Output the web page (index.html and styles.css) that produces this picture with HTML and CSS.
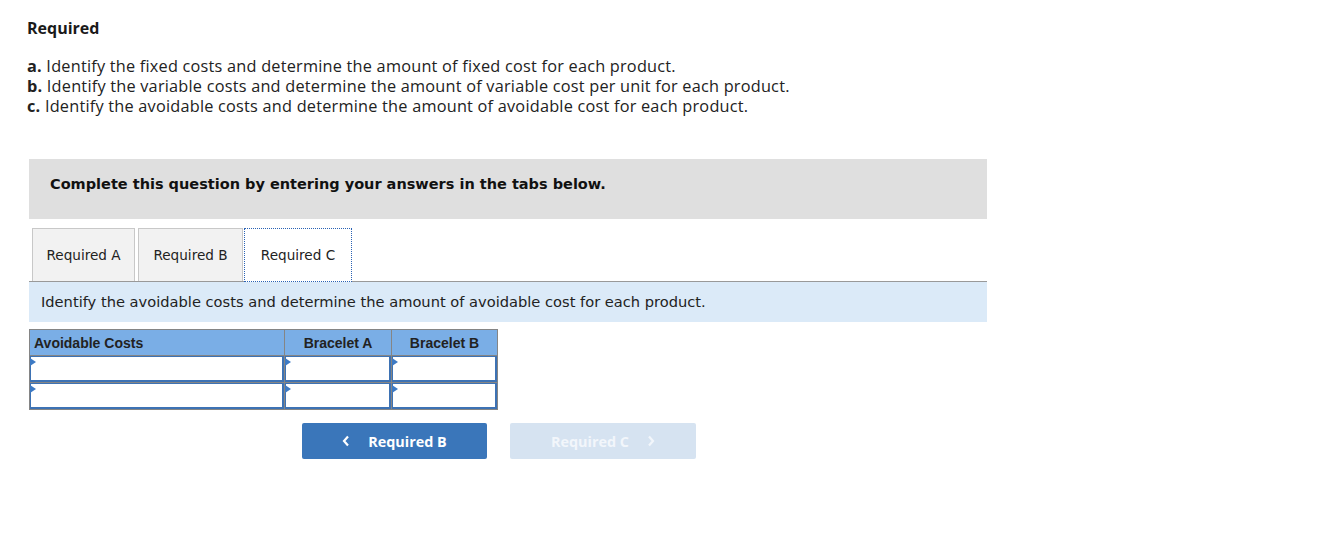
FILE: index.html
```html
<!DOCTYPE html>
<html>
<head>
<meta charset="utf-8">
<link rel="stylesheet" href="styles.css">
</head>
<body>
<div class="page">
  <h2 class="req-title">Required</h2>
  <div class="req-list">
    <p><b>a.</b> Identify the fixed costs and determine the amount of fixed cost for each product.</p>
    <p><b>b.</b> Identify the variable costs and determine the amount of variable cost per unit for each product.</p>
    <p><b>c.</b> Identify the avoidable costs and determine the amount of avoidable cost for each product.</p>
  </div>

  <div class="panel">
    <div class="banner">Complete this question by entering your answers in the tabs below.</div>
    <div class="tabs">
      <div class="tab">Required A</div>
      <div class="tab">Required B</div>
      <div class="tab active">Required C</div>
    </div>
    <div class="instr">Identify the avoidable costs and determine the amount of avoidable cost for each product.</div>

    <div class="grid">
      <div class="hd left">Avoidable Costs</div>
      <div class="hd">Bracelet A</div>
      <div class="hd">Bracelet B</div>
      <div class="inp"></div>
      <div class="inp"></div>
      <div class="inp"></div>
      <div class="inp"></div>
      <div class="inp"></div>
      <div class="inp"></div>
    </div>

    <div class="nav">
      <button class="btn prev"><svg class="chev" width="8" height="12" viewBox="0 0 8 12"><polyline points="6,1.5 2,6 6,10.5" fill="none" stroke="currentColor" stroke-width="2.2"/></svg>Required B</button>
      <button class="btn next">Required C<svg class="chev" width="8" height="12" viewBox="0 0 8 12"><polyline points="2,1.5 6,6 2,10.5" fill="none" stroke="currentColor" stroke-width="2.2"/></svg></button>
    </div>
  </div>
</div>
</body>
</html>
```

FILE: styles.css
```css
html, body {
  margin: 0;
  padding: 0;
  background: #fff;
}
.page {
  padding: 18px 0 0 27px;
  font-family: "Open Sans", Lato, sans-serif;
  color: #222;
  font-variant-ligatures: none;
}
.req-title {
  margin: 0;
  font-size: 16px;
  font-weight: 700;
  line-height: 20px;
  color: #1a1a1a;
}
.req-list {
  margin-top: 18px;
  font-size: 16.3px;
  line-height: 20px;
  letter-spacing: 0.22px;
  color: #222;
}
.req-list p {
  margin: 0;
}
.req-list b {
  font-weight: 700;
}
.panel {
  margin: 43px 0 0 2px;
  width: 958px;
}
.banner {
  background: #dfdfdf;
  height: 60px;
  box-sizing: border-box;
  padding: 17px 0 0 21px;
  font-family: "DejaVu Sans", Verdana, sans-serif;
  font-weight: 700;
  font-size: 14.5px;
  color: #111;
}
.tabs {
  display: flex;
  margin-top: 9px;
  padding-left: 3px;
  border-bottom: 1px solid #999;
  height: 53px;
}
.tab {
  box-sizing: border-box;
  height: 53px;
  width: 103px;
  margin-right: 3px;
  display: flex;
  align-items: center;
  justify-content: center;
  border: 1px solid #c8c8c8;
  border-bottom: none;
  background: #f2f2f2;
  font-family: "DejaVu Sans", Verdana, sans-serif;
  font-size: 13.6px;
  color: #222;
}
.tab:nth-child(2) {
  width: 105px;
  margin-right: 1px;
}
.tab.active {
  width: 108px;
  background: #fff;
  border: 1px dotted #2a62b4;
  height: 54px;
  margin-bottom: -1px;
}
.instr {
  background: #dbeaf8;
  height: 40px;
  box-sizing: border-box;
  padding: 11px 0 0 12px;
  font-family: "DejaVu Sans", Verdana, sans-serif;
  font-size: 14.65px;
  color: #222;
}
.grid {
  margin-top: 7px;
  display: grid;
  grid-template-columns: 254px 106px 105px;
  grid-template-rows: 25px 26px 26px;
  gap: 1px;
  padding: 1px;
  width: max-content;
  background: #858585;
  font-family: "Liberation Sans", Arial, sans-serif;
}
.hd {
  background: #7aaee6;
  font-size: 14px;
  font-weight: 700;
  color: #222;
  display: flex;
  align-items: center;
  justify-content: center;
}
.hd.left {
  justify-content: flex-start;
  padding-left: 4px;
}
.inp {
  position: relative;
  box-sizing: border-box;
  border: 1px solid #3d72b4;
  border-right-width: 2px;
  border-bottom-width: 2px;
  background: #fff;
}
.inp::before {
  content: "";
  position: absolute;
  left: -1px;
  top: 1px;
  border-left: 6px solid #3d7ac4;
  border-top: 4px solid transparent;
  border-bottom: 4px solid transparent;
}
.nav {
  display: flex;
  gap: 23px;
  margin: 13px 0 0 273px;
}
.btn {
  width: 185px;
  height: 36px;
  border: none;
  border-radius: 2px;
  font-family: "Open Sans", "Liberation Sans", sans-serif;
  font-size: 14.4px;
  font-weight: 700;
  color: #fff;
  display: flex;
  align-items: center;
  justify-content: center;
  padding: 0;
}
.btn.prev {
  background: #3a76ba;
}
.btn.next {
  width: 186px;
  background: #d6e3f1;
  color: #f2f6fb;
}
.prev .chev {
  margin-right: 18px;
}
.next .chev {
  margin-left: 18px;
}
```
